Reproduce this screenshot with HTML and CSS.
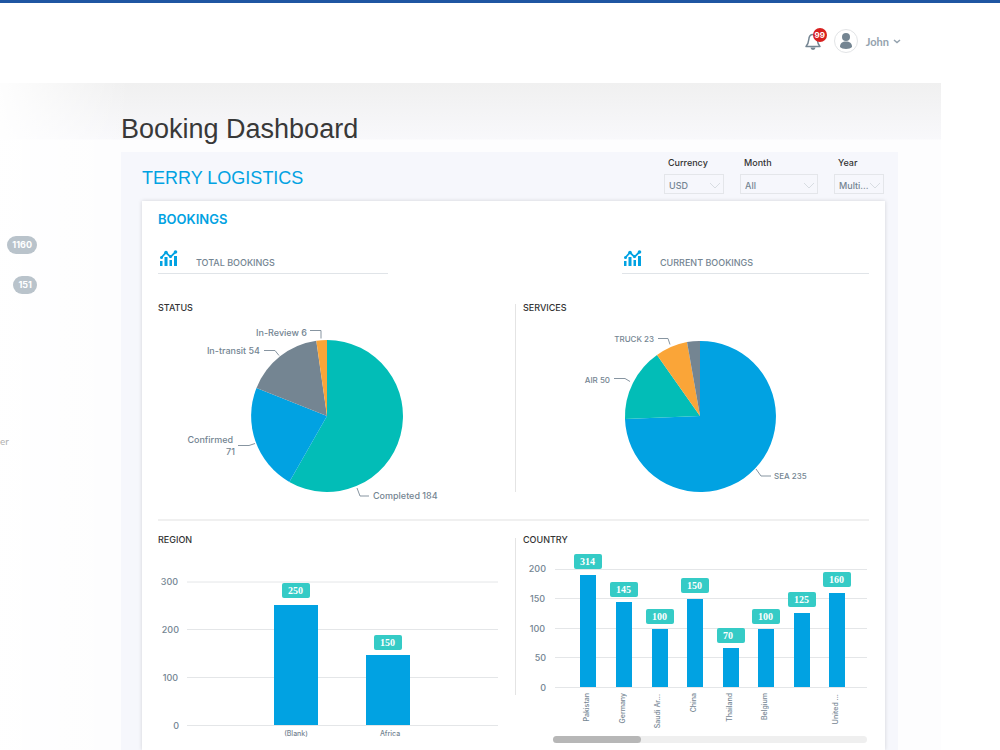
FILE: index.html
```
<!DOCTYPE html>
<html lang="en">
<head>
    <meta charset="UTF-8">
    <meta name="viewport" content="width=device-width, initial-scale=1.0">
    <title>Booking Dashboard</title>
    <link rel="stylesheet" href="styles.css">
</head>
<body>
    <header class="topbar">
        <button class="bell" aria-label="Notifications">
            <svg width="18" height="20" viewBox="0 0 18 20">
                <path d="M2 15.500h14c-2-2-2.500-4-2.800-7C13 5 11.500 3.500 9 3.500S5 5 4.800 8.500c-.3 3-.8 5-2.800 7z" fill="none" stroke="#748592" stroke-width="1.500" stroke-linejoin="round"/>
                <path d="M6.500 16.500h5a2.500 2.500 0 0 1-5 0z" fill="#748592"/>
            </svg>
            <span class="bell-count">99</span>
        </button>
        <button class="user">
            <span class="avatar">
                <svg width="12" height="16" viewBox="0 0 12 16">
                    <circle cx="6" cy="4" r="4" fill="#748592"/>
                    <path d="M0 14c0-4 2.500-5.500 6-5.500s6 1.500 6 5.500c-2 2.500-10 2.500-12 0z" fill="#748592"/>
                </svg>
            </span>
            John
            <svg width="8" height="6" viewBox="0 0 8 6">
                <path d="M1 2l3 2.500 3-2.500" fill="none" stroke="#94a2ae" stroke-width="1.500"/>
            </svg>
        </button>
    </header>

    <div class="layout">
        <aside class="sidebar">
            <span class="count">1160</span>
            <span class="count">151</span>
            <span class="side-item">er</span>
        </aside>

        <main class="main">
            <h1 class="title">Booking Dashboard</h1>

            <div class="panel">
                <div class="panel-head">
                    <h2 class="company">TERRY LOGISTICS</h2>
                    <div class="filters">
                        <div class="filter filter-currency">
                            <label for="currency">Currency</label>
                            <div class="select-box">
                                <select id="currency"><option>USD</option></select>
                                <svg class="arrow" width="12" height="8" viewBox="0 0 12 8"><path d="M1 1l5 5 5-5" fill="none" stroke="#d8dde2"/></svg>
                            </div>
                        </div>
                        <div class="filter filter-month">
                            <label for="month">Month</label>
                            <div class="select-box">
                                <select id="month"><option>All</option></select>
                                <svg class="arrow" width="12" height="8" viewBox="0 0 12 8"><path d="M1 1l5 5 5-5" fill="none" stroke="#d8dde2"/></svg>
                            </div>
                        </div>
                        <div class="filter filter-year">
                            <label for="year">Year</label>
                            <div class="select-box">
                                <select id="year"><option>Multi...</option></select>
                                <svg class="arrow" width="12" height="8" viewBox="0 0 12 8"><path d="M1 1l5 5 5-5" fill="none" stroke="#d8dde2"/></svg>
                            </div>
                        </div>
                    </div>
                </div>

                <div class="card">
                    <h2 class="card-title">BOOKINGS</h2>

                    <div class="kpis">
                        <div class="kpi kpi-total">
                            <svg width="20" height="18" viewBox="0 0 20 18">
                                <path d="M3 8l5-5.500 4.500 4.500 5-5" fill="none" stroke="#01a2e2" stroke-width="1.800"/>
                                <g fill="#01a2e2">
                                    <circle cx="3.500" cy="7.500" r="1.500"/><circle cx="8" cy="2.500" r="1.800"/><circle cx="12.500" cy="6.500" r="1.500"/><circle cx="17.500" cy="2" r="1.800"/>
                                    <rect x="2" y="11" width="2.500" height="5"/><rect x="6.500" y="7" width="3" height="9"/><rect x="11.500" y="10" width="2.500" height="6"/><rect x="16" y="6" width="3" height="10"/>
                                </g>
                            </svg>
                            <span>TOTAL BOOKINGS</span>
                        </div>
                        <div class="kpi kpi-current">
                            <svg width="20" height="18" viewBox="0 0 20 18">
                                <path d="M3 8l5-5.500 4.500 4.500 5-5" fill="none" stroke="#01a2e2" stroke-width="1.800"/>
                                <g fill="#01a2e2">
                                    <circle cx="3.500" cy="7.500" r="1.500"/><circle cx="8" cy="2.500" r="1.800"/><circle cx="12.500" cy="6.500" r="1.500"/><circle cx="17.500" cy="2" r="1.800"/>
                                    <rect x="2" y="11" width="2.500" height="5"/><rect x="6.500" y="7" width="3" height="9"/><rect x="11.500" y="10" width="2.500" height="6"/><rect x="16" y="6" width="3" height="10"/>
                                </g>
                            </svg>
                            <span>CURRENT BOOKINGS</span>
                        </div>
                    </div>

                    <div class="row">
                        <section>
                            <h3>STATUS</h3>
                            <svg class="chart" viewBox="0 0 357 190">
                                <path class="teal" d="M169 102V26A76 76 0 1 1 131.300 168z"/>
                                <path class="blue" d="M169 102L131.300 168A76 76 0 0 1 98.500 74z"/>
                                <path class="gray" d="M169 102L98.500 74A76 76 0 0 1 158.300 26.800z"/>
                                <path class="orange" d="M169 102L158.300 26.800A76 76 0 0 1 169 26z"/>
                                <path class="leader" d="M152 16.500h11v8M106 36.500h11l4 5M80 131.500h11l6-2M199 174l3 8h9"/>
                                <text class="end" x="149" y="22">In-Review 6</text>
                                <text class="end" x="102" y="40">In-transit 54</text>
                                <text class="end" x="75" y="129">Confirmed</text>
                                <text class="end" x="77" y="141">71</text>
                                <text x="215" y="185">Completed 184</text>
                            </svg>
                        </section>
                        <div class="divider"></div>
                        <section class="right">
                            <h3>SERVICES</h3>
                            <svg class="chart small" viewBox="0 0 346 190">
                                <path class="blue" d="M177 102V27A75.500 75.500 0 1 1 102 105z"/>
                                <path class="teal" d="M177 102L102 105A75.500 75.500 0 0 1 134 41z"/>
                                <path class="orange" d="M177 102L134 41A75.500 75.500 0 0 1 164 28z"/>
                                <path class="gray" d="M177 102L164 28A75.500 75.500 0 0 1 177 27z"/>
                                <path class="leader" d="M135 24.500h10l2 6M91 64.500h11l5 3M233 155l5 7h10"/>
                                <text class="end" x="131" y="28">TRUCK 23</text>
                                <text class="end" x="87" y="69">AIR 50</text>
                                <text x="251" y="165">SEA 235</text>
                            </svg>
                        </section>
                    </div>

                    <hr class="rule">

                    <div class="row row-bars">
                        <section>
                            <h3>REGION</h3>
                            <svg class="chart" viewBox="0 0 357 196">
                                <path class="grid" d="M29 36h311M29 83.500h311M29 131.500h311M29 179.500h311"/>
                                <g class="axis">
                                    <text x="20" y="39">300</text>
                                    <text x="21" y="87">200</text>
                                    <text x="20" y="135">100</text>
                                    <text x="21" y="183">0</text>
                                </g>
                                <g class="blue">
                                    <rect x="116" y="59" width="44" height="120"/>
                                    <rect x="208" y="109" width="44" height="70"/>
                                </g>
                                <g class="tag">
                                    <rect x="124" y="37" width="28" height="15" rx="2"/><text x="130" y="48">250</text>
                                    <rect x="216" y="89" width="28" height="15" rx="2"/><text x="222" y="100">150</text>
                                </g>
                                <g class="names">
                                    <text x="138" y="190">(Blank)</text>
                                    <text x="232" y="190">Africa</text>
                                </g>
                            </svg>
                        </section>
                        <div class="divider"></div>
                        <section class="right">
                            <h3>COUNTRY</h3>
                            <svg class="chart" viewBox="0 0 346 188">
                                <path class="grid" d="M32 23.500h312M32 52.500h312M32 82.500h312M32 111.500h312M32 141.500h312"/>
                                <g class="axis">
                                    <text x="23" y="26">200</text>
                                    <text x="22" y="56">150</text>
                                    <text x="22" y="86">100</text>
                                    <text x="23" y="115">50</text>
                                    <text x="23" y="145">0</text>
                                </g>
                                <g class="blue">
                                    <rect x="57" y="29" width="16" height="112"/>
                                    <rect x="93" y="56" width="16" height="85"/>
                                    <rect x="129" y="83" width="16" height="58"/>
                                    <rect x="164" y="53" width="16" height="88"/>
                                    <rect x="200" y="102" width="16" height="39"/>
                                    <rect x="235" y="83" width="16" height="58"/>
                                    <rect x="271" y="67" width="16" height="74"/>
                                    <rect x="306" y="47" width="16" height="94"/>
                                </g>
                                <g class="tag">
                                    <rect x="51" y="8" width="28" height="15" rx="2"/><text x="57" y="19">314</text>
                                    <rect x="87" y="36" width="28" height="15" rx="2"/><text x="93" y="47">145</text>
                                    <rect x="123" y="63" width="28" height="15" rx="2"/><text x="129" y="74">100</text>
                                    <rect x="158" y="32" width="28" height="15" rx="2"/><text x="164" y="43">150</text>
                                    <rect x="194" y="82" width="28" height="15" rx="2"/><text x="200" y="93">70</text>
                                    <rect x="229" y="63" width="28" height="15" rx="2"/><text x="235" y="74">100</text>
                                    <rect x="265" y="46" width="28" height="15" rx="2"/><text x="271" y="57">125</text>
                                    <rect x="300" y="26" width="28" height="15" rx="2"/><text x="306" y="37">160</text>
                                </g>
                                <g class="names-vertical">
                                    <text transform="translate(66 147) rotate(-90)">Pakistan</text>
                                    <text transform="translate(102 147) rotate(-90)">Germany</text>
                                    <text transform="translate(137 148) rotate(-90)">Saudi Ar...</text>
                                    <text transform="translate(173 147) rotate(-90)">China</text>
                                    <text transform="translate(209 147) rotate(-90)">Thailand</text>
                                    <text transform="translate(244 147) rotate(-90)">Belgium</text>
                                    <text transform="translate(315 148) rotate(-90)">United ...</text>
                                </g>
                            </svg>
                            <div class="scroll"><div class="scroll-thumb"></div></div>
                        </section>
                    </div>
                </div>
            </div>
        </main>
    </div>
</body>
</html>
```
FILE: styles.css
```
* {
    box-sizing: border-box;
}
body {
    margin: 0;
    min-height: 100vh;
    display: flex;
    flex-direction: column;
    font-family: Inter, Lato, sans-serif;
    background: #fff;
    color: #748592;
}
h1, h2, h3 {
    margin: 0;
    font-weight: 400;
}
button {
    padding: 0;
    border: none;
    background: none;
    font-family: inherit;
    cursor: pointer;
}

/* top bar */
.topbar {
    height: 83px;
    padding: 0 99px 4px 0;
    border-top: 3px solid #1f56a2;
    display: flex;
    justify-content: flex-end;
    align-items: center;
    gap: 12px;
}
.bell {
    position: relative;
    width: 18px;
    height: 20px;
}
.bell-count {
    position: absolute;
    top: -3px;
    left: 9px;
    width: 14px;
    height: 14px;
    border-radius: 50%;
    background: #d8201f;
    color: #fff;
    font-size: 8px;
    font-weight: 700;
    line-height: 14px;
    text-align: center;
}
.user {
    display: flex;
    align-items: center;
    gap: 4px;
    font-family: Lato, sans-serif;
    font-size: 11px;
    font-weight: 700;
    color: #94a2ae;
}
.avatar {
    width: 24px;
    height: 24px;
    margin-right: 4px;
    border: 1px solid #e2e4e6;
    border-radius: 50%;
    display: flex;
    align-items: center;
    justify-content: center;
}

/* page layout */
.layout {
    flex: 1;
    display: flex;
    gap: 84px;
    margin-right: 59px;
    padding-right: 43px;
    background: linear-gradient(to right, rgba(255, 255, 255, 0.9), rgba(255, 255, 255, 0) 130px), linear-gradient(#f0f0f0, #f8f8fb 56px, #fdfdfe 57px);
}
.sidebar {
    width: 37px;
    padding-top: 153px;
    display: flex;
    flex-direction: column;
    align-items: flex-end;
}
.count {
    height: 18px;
    margin-bottom: 22px;
    padding: 0 5px;
    border-radius: 9px;
    background: #b9c3cb;
    color: #fff;
    font-size: 9px;
    font-weight: 700;
    line-height: 18px;
}
.side-item {
    align-self: flex-start;
    margin-top: 117px;
    font-family: Lato, sans-serif;
    font-size: 10px;
    line-height: 16px;
    color: #b0b0b0;
}
.main {
    flex: 1;
    display: flex;
    flex-direction: column;
}
.title {
    height: 69px;
    padding-top: 30px;
    font-family: "Liberation Sans", Arial, sans-serif;
    font-size: 27px;
    line-height: 32px;
    color: #383838;
}
.panel {
    flex: 1;
    display: flex;
    flex-direction: column;
    padding: 0 13px 0 21px;
    background: #f6f7fc;
}
.panel-head {
    height: 49px;
    display: flex;
    justify-content: space-between;
}
.company {
    padding-top: 14px;
    font-family: "Liberation Sans", Arial, sans-serif;
    font-size: 18px;
    line-height: 24px;
    color: #01a2e2;
}

/* filters */
.filters {
    display: flex;
    gap: 16px;
    padding: 5px 1px 0 0;
}
.filter-currency {
    width: 60px;
}
.filter-month {
    width: 78px;
}
.filter-year {
    width: 50px;
}
.filter label {
    display: block;
    padding-left: 4px;
    margin-bottom: 5px;
    font-size: 9px;
    font-weight: 500;
    line-height: 12px;
    color: #333;
}
.select-box {
    position: relative;
}
.select-box select {
    display: block;
    width: 100%;
    height: 20px;
    padding: 2px 4px 0;
    appearance: none;
    border: 1px solid #e4e6ea;
    border-radius: 0;
    background: transparent;
    font-family: inherit;
    font-size: 9px;
    font-weight: 500;
    color: #748592;
}
.arrow {
    position: absolute;
    top: 8px;
    right: 3px;
    pointer-events: none;
}

/* card */
.card {
    flex: 1;
    padding: 8px 16px 0;
    background: #fff;
    box-shadow: 0 0 4px rgba(0, 0, 0, 0.15);
}
.card-title {
    font-size: 13px;
    font-weight: 600;
    line-height: 20px;
    color: #01a2e2;
}
.kpis {
    display: flex;
    justify-content: space-between;
    margin-top: 15px;
}
.kpi {
    height: 30px;
    display: flex;
    align-items: center;
    gap: 18px;
    border-bottom: 1px solid #e0e4e8;
    font-size: 9px;
    font-weight: 500;
}
.kpi span {
    padding-top: 8px;
}
.kpi-total {
    width: 230px;
}
.kpi-current {
    width: 247px;
}
.row {
    display: grid;
    grid-template-columns: 357fr 1px 353fr;
    margin-top: 28px;
}
.row h3 {
    font-size: 9px;
    font-weight: 500;
    line-height: 12px;
    color: #333;
}
.right {
    padding-left: 7px;
}
.divider {
    margin: 2px 0 12px;
    background: #e4e4e4;
}
.rule {
    height: 2px;
    margin: 15px 0 0;
    border: none;
    background: #f0f0f0;
}
.row-bars {
    margin-top: 13px;
}
.row-bars .divider {
    margin: 4px 0 48px;
}

/* charts */
.chart {
    display: block;
    width: 100%;
}
.chart text {
    font-size: 9px;
    font-weight: 500;
    fill: #748592;
}
.chart.small text {
    font-size: 8px;
}
.chart .end, .chart .axis text, .chart .names-vertical text {
    text-anchor: end;
}
.teal {
    fill: #02bdb7;
}
.blue {
    fill: #01a2e2;
}
.gray {
    fill: #748592;
}
.orange {
    fill: #faa538;
}
.leader {
    fill: none;
    stroke: #8795a1;
}
.grid {
    stroke: #e4e6e8;
}
.chart .tag text {
    font-family: "Liberation Serif", serif;
    font-size: 10px;
    font-weight: 700;
    fill: #fff;
}
.tag rect {
    fill: #35cbc6;
}
.chart .names text {
    font-size: 7px;
    text-anchor: middle;
}
.chart .names-vertical text {
    font-size: 7px;
}
.scroll {
    height: 7px;
    margin: 2px 2px 0 30px;
    border-radius: 4px;
    background: #efefef;
}
.scroll-thumb {
    width: 28%;
    height: 7px;
    border-radius: 4px;
    background: #b7b7b7;
}
```
